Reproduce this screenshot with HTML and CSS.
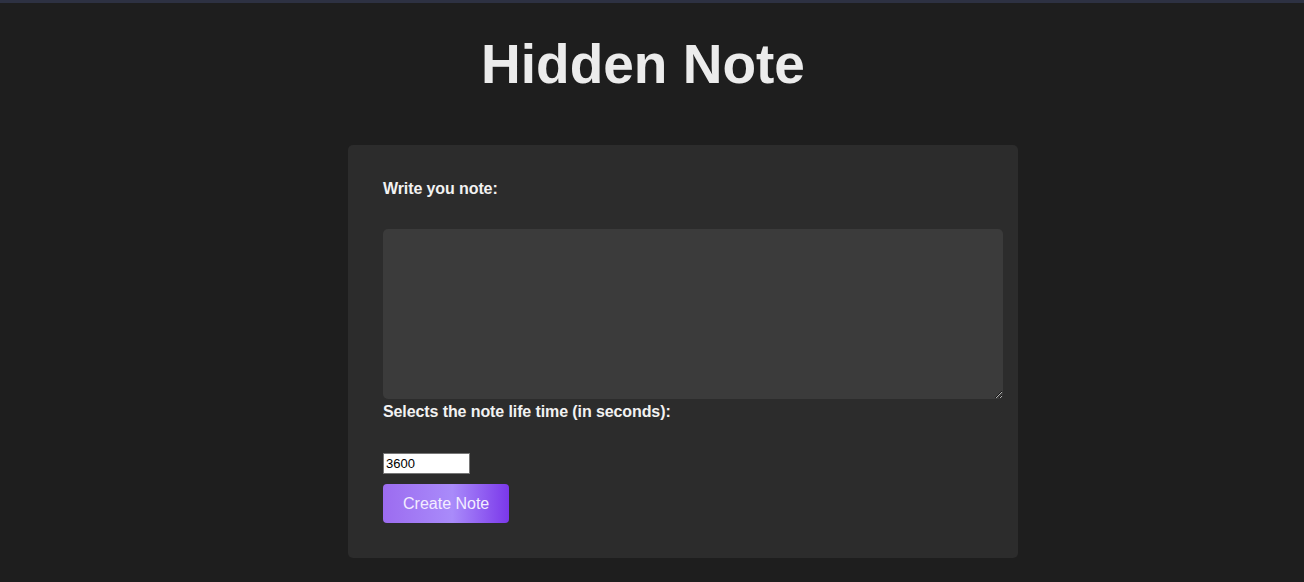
FILE: index.html
```html
<!DOCTYPE html>
<html lang="en">
<head>
    <meta charset="UTF-8">
    <meta name="viewport" content="width=device-width, initial-scale=1.0">
    <title>Hidden Note</title>
    <link rel="stylesheet" href="styles.css">
</head>
<body>
    <div class="top-bar"></div>

    <h1 class="title">Hidden Note</h1>

    <div class="note-card">
        <form class="note-form" onsubmit="return false;">
            <label for="note-text" class="note-label">Write you note:</label>
            <textarea id="note-text" class="note-text"></textarea>

            <label for="life-time" class="note-label time-label">Selects the note life time (in seconds):</label>
            <input type="number" id="life-time" class="life-time" value="3600">

            <button type="submit" class="create-button">Create Note</button>
        </form>
    </div>
</body>
</html>
```

FILE: styles.css
```css
body {
    font-family: 'Liberation Sans', Arial, Helvetica, sans-serif;
    margin: 0;
    padding: 0;
    background-color: #1e1e1e;
    color: #f0f0f0;
}

.top-bar {
    height: 3px;
    background-color: #2d3142;
}

.title {
    margin: 30px 0 0;
    padding-right: 18px;
    text-align: center;
    font-size: 55px;
    font-weight: bold;
    color: #ececec;
    line-height: 62px;
}

.note-card {
    width: 600px;
    margin: 50px 0 0 calc(50% - 304px);
    padding: 35px;
    background-color: #2c2c2c;
    border-radius: 5px;
}

.note-form {
    display: flex;
    flex-direction: column;
    align-items: flex-start;
}

.note-label {
    font-size: 16px;
    font-weight: bold;
    line-height: 18px;
    letter-spacing: -0.1px;
    color: #f2f2f2;
    margin-bottom: 31px;
}

.note-text {
    width: 100%;
    height: 150px;
    padding: 10px;
    margin: 0 0 4px;
    border: none;
    border-radius: 5px;
    background-color: #3b3b3b;
    color: #f0f0f0;
    font-family: inherit;
    font-size: 14px;
    outline: none;
}

.time-label {
    margin-bottom: 32px;
}

.life-time {
    width: 87px;
    height: 21px;
    box-sizing: border-box;
    padding: 1px 2px;
    margin: 0 0 10px;
    border: 1px solid #767676;
    background-color: #fff;
    color: #000;
    font-family: 'Liberation Sans', Arial, sans-serif;
    font-size: 13px;
    -moz-appearance: textfield;
}

.life-time::-webkit-inner-spin-button,
.life-time::-webkit-outer-spin-button {
    -webkit-appearance: none;
    margin: 0;
}

.create-button {
    height: 39px;
    padding: 0 20px;
    border: none;
    border-radius: 4px;
    background: linear-gradient(90deg, #9c6cf0 0%, #a98bfa 55%, #7b38ea 100%);
    color: #f3edff;
    font-family: inherit;
    font-size: 16px;
    cursor: pointer;
}
```
